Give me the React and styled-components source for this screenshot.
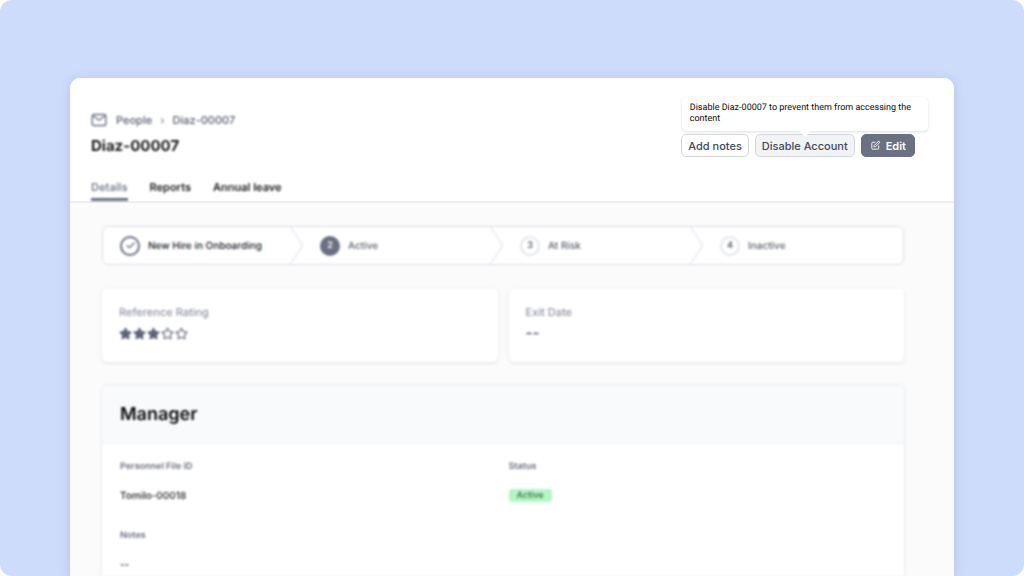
import React from "react";
import styled, { createGlobalStyle } from "styled-components";
import { FaStar, FaRegStar } from "react-icons/fa";
import { HiOutlinePencilAlt } from "react-icons/hi";

const GlobalStyle = createGlobalStyle`
	* {
		box-sizing: border-box;
	}
	body {
		margin: 0;
		background: #ffffff;
		font-family: Inter, "Liberation Sans", sans-serif;
		font-size: 11px;
		line-height: 14px;
		color: #18191c;
		text-rendering: geometricPrecision;
	}
	h1, h2, p, dl, dt, dd, ol {
		margin: 0;
		padding: 0;
	}
	a {
		color: inherit;
		text-decoration: none;
	}
`;

const Page = styled.div`
	display: flex;
	flex-direction: column;
	min-height: 100vh;
	padding: 78px 70px 0;
	border-radius: 12px;
	overflow: hidden;
	background: #cddcfb;
`;

const Panel = styled.main`
	flex: 1;
	display: flex;
	flex-direction: column;
	border-radius: 10px 10px 0 0;
	background: #fbfbfc;
	box-shadow: 0 2px 12px rgba(60, 80, 130, 0.18);
`;

const Header = styled.header`
	padding: 33px 39px 0 21px;
	border-bottom: 2px solid #eeeff1;
	border-radius: 10px 10px 0 0;
	background: #ffffff;
`;

const HeaderTop = styled.div`
	display: flex;
	justify-content: space-between;
	align-items: flex-end;
`;

const Soft = styled.div`
	filter: blur(1px);
`;

const Breadcrumb = styled.nav`
	display: flex;
	align-items: center;
	height: 18px;
	color: #555a6e;
	font-weight: 500;
	svg {
		margin-right: 9px;
	}
	span {
		margin: 0 8px;
		color: #8b8f9d;
	}
`;

const Title = styled.h1`
	margin-top: 6px;
	font-size: 15px;
	line-height: 22px;
	font-weight: 700;
`;

const Actions = styled.div`
	display: flex;
	gap: 6px;
`;

const ActionWrap = styled.div`
	position: relative;
`;

const Button = styled.button`
	display: flex;
	align-items: center;
	gap: 5px;
	height: 23px;
	padding: 0 ${p => (p.$primary ? 8 : 6)}px;
	border: 1px solid ${p => (p.$primary ? "#6b7083" : "#d3d6de")};
	border-radius: 5px;
	background: ${p => (p.$primary ? "#6b7083" : p.$active ? "#f1f3f5" : "#ffffff")};
	color: ${p => (p.$primary ? "#ffffff" : "#414960")};
	font-family: inherit;
	font-size: 11px;
	font-weight: ${p => (p.$primary ? 600 : 500)};
	line-height: 14px;
	cursor: pointer;
`;

const Tooltip = styled.div`
	position: absolute;
	left: 50%;
	bottom: calc(100% + 3px);
	width: 246px;
	padding: 6px 8px;
	transform: translateX(-50%);
	border-radius: 5px;
	background: #ffffff;
	box-shadow: 0 1px 3px rgba(40, 45, 60, 0.16);
	color: #0c0d0e;
	font-family: Roboto, Inter, sans-serif;
	font-size: 9px;
	line-height: 11px;
	&::after {
		content: "";
		position: absolute;
		left: 50%;
		top: 100%;
		transform: translateX(-50%);
		border: 6px solid transparent;
		border-top-color: #ffffff;
		border-bottom: 0;
	}
`;

const Tabs = styled.nav`
	display: flex;
	gap: 22px;
	margin-top: 23px;
	filter: blur(1px);
`;

const Tab = styled.a`
	height: 21px;
	border-bottom: 3px solid ${p => (p.$active ? "#6b7083" : "transparent")};
	color: ${p => (p.$active ? "#7b8090" : "#18191c")};
	font-size: 11px;
	font-weight: 600;
`;

const Content = styled.div`
	flex: 1;
	display: flex;
	flex-direction: column;
	gap: 24px;
	padding: 23px 50px 0 32px;
	filter: blur(1px);
`;

const Stepper = styled.ol`
	display: grid;
	grid-template-columns: repeat(4, 1fr);
	border: 1px solid #d9dce3;
	border-radius: 6px;
	background: #ffffff;
	list-style: none;
`;

const Step = styled.li`
	display: flex;
	align-items: center;
	gap: 8px;
	height: 37px;
	padding-left: 17px;
	color: ${p => (p.$done ? "#24252c" : "#5a5e6c")};
	font-size: 10px;
	font-weight: 500;
`;

const StepMark = styled.span`
	display: flex;
	align-items: center;
	justify-content: center;
	width: 20px;
	height: 20px;
	border: 2px solid ${p => (p.$status === "upcoming" ? "#e3e5ea" : "#6b7083")};
	border-radius: 50%;
	background: ${p => (p.$status === "current" ? "#6b7083" : "#ffffff")};
	color: ${p => (p.$status === "current" ? "#ffffff" : "#5a5e6c")};
	font-size: 9px;
	font-weight: 600;
`;

const Divider = styled.svg`
	margin-left: auto;
`;

const Cards = styled.div`
	display: grid;
	grid-template-columns: 1fr 1fr;
	gap: 11px;
`;

const Card = styled.section`
	height: 73px;
	padding: 16px 17px;
	border-radius: 5px;
	background: #ffffff;
	box-shadow: 0 1px 3px rgba(50, 55, 80, 0.14);
`;

const CardLabel = styled.h2`
	color: #9093a1;
	font-size: 11px;
	line-height: 14px;
	font-weight: 500;
`;

const CardValue = styled.p`
	display: flex;
	align-items: center;
	gap: 1px;
	height: 14px;
	margin-top: 7px;
	color: #5f6477;
	font-size: 15px;
	font-weight: 600;
`;

const Manager = styled.section`
	flex: 1;
	border-radius: 5px 5px 0 0;
	background: #ffffff;
	box-shadow: 0 0 3px rgba(50, 55, 80, 0.18);
`;

const ManagerTitle = styled.h2`
	padding: 16px 18px;
	border-bottom: 1px solid #eef0f3;
	border-radius: 5px 5px 0 0;
	background: #f9fafc;
	font-size: 18px;
	line-height: 25px;
	font-weight: 600;
	color: #050506;
`;

const Fields = styled.dl`
	display: grid;
	grid-template-columns: 1fr 1fr;
	gap: 27px 11px;
	padding: 17px 18px 4px;
	dt {
		color: #6b6f7f;
		font-size: 9px;
		line-height: 12px;
		font-weight: 600;
	}
	dd {
		margin-top: 16px;
		color: #18191c;
		font-size: 10px;
		font-weight: 500;
	}
`;

const Badge = styled.span`
	display: block;
	width: fit-content;
	padding: 0 8px;
	border-radius: 3px;
	background: #b5f4c3;
	color: #2f7042;
	font-size: 9px;
	line-height: 13px;
`;

const steps = [
	{ label: "New Hire in Onboarding", status: "done" },
	{ label: "Active", status: "current" },
	{ label: "At Risk", status: "upcoming" },
	{ label: "Inactive", status: "upcoming" },
];

const MailIcon = () => (
	<svg width="16" height="14" viewBox="0 0 16 14" fill="none" stroke="#6b7083" strokeWidth="1.4">
		<rect x="1.2" y="1.5" width="13.6" height="11" rx="1.8" />
		<path d="M2 2.8 L8 7.2 L14 2.8" strokeLinejoin="round" />
	</svg>
);

const CheckIcon = () => (
	<svg width="11" height="11" viewBox="0 0 11 11" fill="none" stroke="#6b7083" strokeWidth="1.3">
		<path d="M2 5.6 L4.4 7.8 L9.2 3" strokeLinecap="round" strokeLinejoin="round" />
	</svg>
);

export default function App() {
	return (
		<Page>
			<GlobalStyle />
			<Panel>
				<Header>
					<HeaderTop>
						<Soft>
							<Breadcrumb aria-label="Breadcrumb">
								<MailIcon />
								<a href="#people">People</a>
								<span>›</span>
								<a href="#diaz">Diaz-00007</a>
							</Breadcrumb>
							<Title>Diaz-00007</Title>
						</Soft>
						<Actions>
							<Button type="button">Add notes</Button>
							<ActionWrap>
								<Button type="button" $active aria-describedby="disable-tip">
									Disable Account
								</Button>
								<Tooltip role="tooltip" id="disable-tip">
									Disable Diaz-00007 to prevent them from accessing the content
								</Tooltip>
							</ActionWrap>
							<Button type="button" $primary>
								<HiOutlinePencilAlt size={11} />
								Edit
							</Button>
						</Actions>
					</HeaderTop>
					<Tabs>
						<Tab href="#details" $active>Details</Tab>
						<Tab href="#reports">Reports</Tab>
						<Tab href="#leave">Annual leave</Tab>
					</Tabs>
				</Header>
				<Content>
					<Stepper>
						{steps.map((step, i) => (
							<Step key={step.label} $done={step.status === "done"}>
								<StepMark $status={step.status}>
									{step.status === "done" ? <CheckIcon /> : i + 1}
								</StepMark>
								{step.label}
								{i < steps.length - 1 && (
									<Divider width="13" height="37" viewBox="0 0 13 37" fill="none" stroke="#d9dce3">
										<path d="M0.5 0 L12.5 18.5 L0.5 37" />
									</Divider>
								)}
							</Step>
						))}
					</Stepper>
					<Cards>
						<Card>
							<CardLabel>Reference Rating</CardLabel>
							<CardValue>
								{[1, 2, 3, 4, 5].map(n =>
									n <= 3 ? <FaStar key={n} size={13} /> : <FaRegStar key={n} size={13} />
								)}
							</CardValue>
						</Card>
						<Card>
							<CardLabel>Exit Date</CardLabel>
							<CardValue>--</CardValue>
						</Card>
					</Cards>
					<Manager>
						<ManagerTitle>Manager</ManagerTitle>
						<Fields>
							<div>
								<dt>Personnel File ID</dt>
								<dd>Tomilo-00018</dd>
							</div>
							<div>
								<dt>Status</dt>
								<dd>
									<Badge>Active</Badge>
								</dd>
							</div>
							<div>
								<dt>Notes</dt>
								<dd>--</dd>
							</div>
						</Fields>
					</Manager>
				</Content>
			</Panel>
		</Page>
	);
}
